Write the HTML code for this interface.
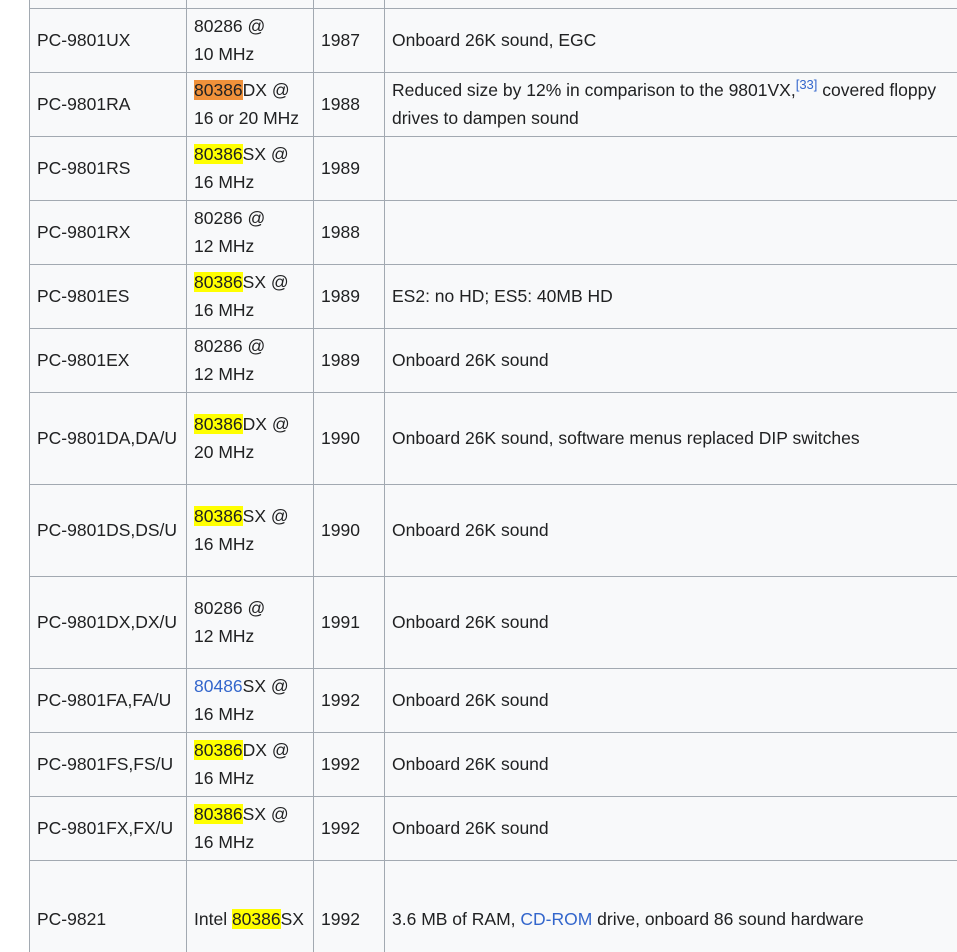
<!DOCTYPE html>
<html><head><meta charset="utf-8"><style>
html,body{margin:0;padding:0;background:#fff;width:957px;height:952px;overflow:hidden;}
body{font-family:"Liberation Sans",Arial,sans-serif;font-size:17.5px;color:#202122;position:relative;}
table{position:absolute;left:29px;top:-56px;border-collapse:collapse;table-layout:fixed;width:1000px;}
td{border:1px solid #a2a9b1;background:#f8f9fa;padding:0 7px 2px 7px;line-height:28px;vertical-align:middle;}
.y{background:#ffff00;}
.o{background:#f0913a;}
a{color:#3366cc;text-decoration:none;}
sup{font-size:13px;line-height:0;vertical-align:7px;}
</style></head><body>
<table>
<colgroup><col style="width:157px"><col style="width:127px"><col style="width:71px"><col></colgroup>
<tr style="height:64px"><td></td><td></td><td></td><td></td></tr>
<tr style="height:64px"><td>PC-9801UX</td><td>80286 @<br>10 MHz</td><td>1987</td><td>Onboard 26K sound, EGC</td></tr>
<tr style="height:64px"><td>PC-9801RA</td><td><span class="o">80386</span>DX @<br>16 or 20 MHz</td><td>1988</td><td>Reduced size by 12% in comparison to the 9801VX,<sup><a>[33]</a></sup> covered floppy<br>drives to dampen sound</td></tr>
<tr style="height:64px"><td>PC-9801RS</td><td><span class="y">80386</span>SX @<br>16 MHz</td><td>1989</td><td></td></tr>
<tr style="height:64px"><td>PC-9801RX</td><td>80286 @<br>12 MHz</td><td>1988</td><td></td></tr>
<tr style="height:64px"><td>PC-9801ES</td><td><span class="y">80386</span>SX @<br>16 MHz</td><td>1989</td><td>ES2: no HD; ES5: 40MB HD</td></tr>
<tr style="height:64px"><td>PC-9801EX</td><td>80286 @<br>12 MHz</td><td>1989</td><td>Onboard 26K sound</td></tr>
<tr style="height:92px"><td>PC-9801DA,DA/U</td><td><span class="y">80386</span>DX @<br>20 MHz</td><td>1990</td><td>Onboard 26K sound, software menus replaced DIP switches</td></tr>
<tr style="height:92px"><td>PC-9801DS,DS/U</td><td><span class="y">80386</span>SX @<br>16 MHz</td><td>1990</td><td>Onboard 26K sound</td></tr>
<tr style="height:92px"><td>PC-9801DX,DX/U</td><td>80286 @<br>12 MHz</td><td>1991</td><td>Onboard 26K sound</td></tr>
<tr style="height:64px"><td>PC-9801FA,FA/U</td><td><a>80486</a>SX @<br>16 MHz</td><td>1992</td><td>Onboard 26K sound</td></tr>
<tr style="height:64px"><td>PC-9801FS,FS/U</td><td><span class="y">80386</span>DX @<br>16 MHz</td><td>1992</td><td>Onboard 26K sound</td></tr>
<tr style="height:64px"><td>PC-9801FX,FX/U</td><td><span class="y">80386</span>SX @<br>16 MHz</td><td>1992</td><td>Onboard 26K sound</td></tr>
<tr style="height:118px"><td>PC-9821</td><td>Intel <span class="y">80386</span>SX</td><td>1992</td><td>3.6 MB of RAM, <a>CD-ROM</a> drive, onboard 86 sound hardware</td></tr>
</table>
</body></html>
